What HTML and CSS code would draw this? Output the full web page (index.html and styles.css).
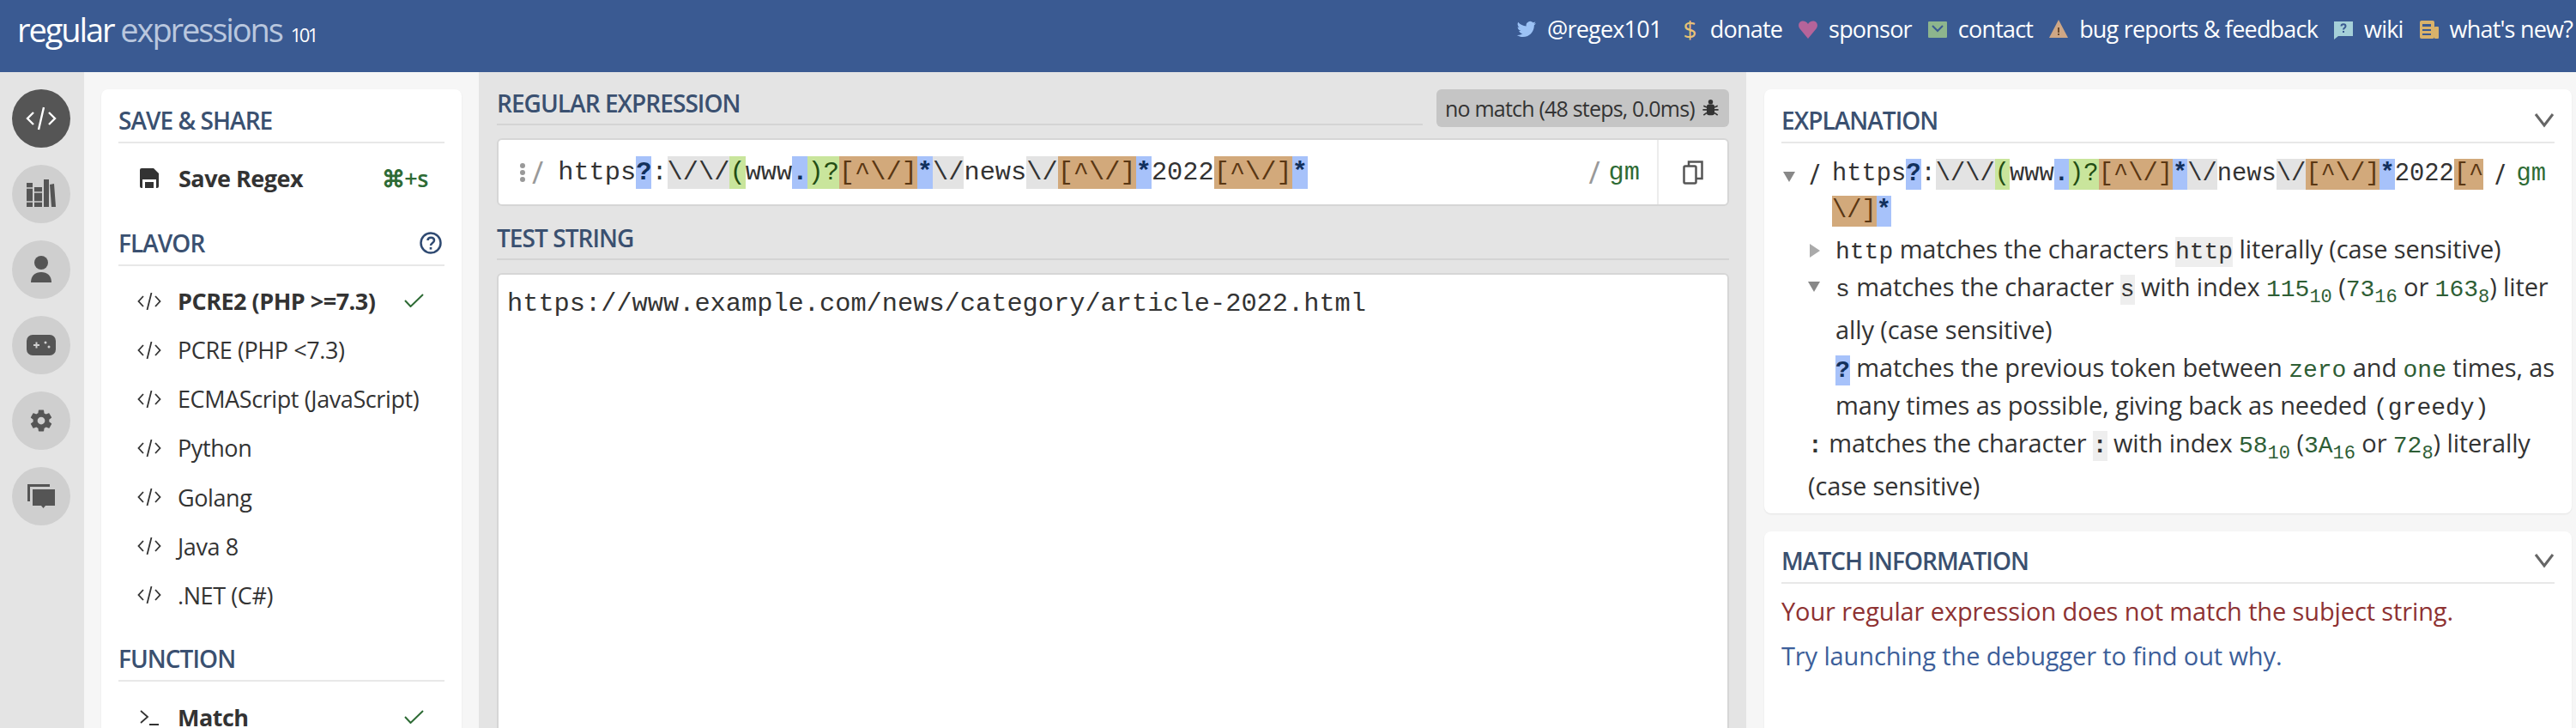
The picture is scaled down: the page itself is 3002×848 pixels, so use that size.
FILE: index.html
```html
<!DOCTYPE html>
<html lang="en">
<head>
<meta charset="utf-8">
<title>regex101</title>
<link rel="stylesheet" href="styles.css">
</head>
<body>
<header class="top">
  <div class="logo"><span class="l1">regular</span><span class="l2">expressions</span><span class="l3">101</span></div>
  <nav class="nav">
    <a class="nav-item"><svg class="ni" viewBox="0 0 24 24"><path fill="#9cc2f5" d="M23 5c-.8.4-1.7.6-2.6.7.9-.6 1.6-1.4 2-2.5-.9.5-1.8.9-2.9 1.1A4.6 4.6 0 0 0 11.7 8.500C7.900 8.300 4.500 6.500 2.200 3.700c-1.200 2.100-.6 4.800 1.400 6.100-.7 0-1.400-.2-2-.6 0 2.200 1.500 4.100 3.700 4.600-.7.200-1.400.2-2.100.1.600 1.800 2.300 3.100 4.300 3.200A9.300 9.300 0 0 1 .7 19c2.100 1.300 4.500 2.100 7.100 2.100 8.500 0 13.300-7.200 13-13.600.9-.7 1.700-1.500 2.200-2.500z"/></svg><span>@regex101</span></a>
    <a class="nav-item wide"><span class="dollar">$</span><span>donate</span></a>
    <a class="nav-item"><svg class="ni" viewBox="0 0 24 24"><path fill="#b5649a" d="M12 23 2.500 11.500C-.5 7.500 1.500 2.500 6 2.500c2.800 0 4.800 1.500 6 3.500 1.200-2 3.200-3.500 6-3.500 4.500 0 6.500 5 3.500 9z"/></svg><span>sponsor</span></a>
    <a class="nav-item"><svg class="ni" viewBox="0 0 24 24"><rect x="1" y="3" width="22" height="19" rx="1" fill="#8db58d"/><path d="M6 8l6 6 6-6" fill="none" stroke="#3a5a92" stroke-width="2"/></svg><span>contact</span></a>
    <a class="nav-item"><svg class="ni" viewBox="0 0 24 24"><path fill="#cfa785" d="M12 1 23 22H1z"/><rect x="11" y="10" width="2" height="6" fill="#6b4a2c"/><rect x="11" y="17" width="2" height="2" fill="#6b4a2c"/></svg><span>bug reports &amp; feedback</span></a>
    <a class="nav-item"><svg class="ni" viewBox="0 0 24 24"><path fill="#a5d0d8" d="M1 3h22v17H6l-5 4z"/><path d="M9.500 8.500c0-3 5-3 5 0 0 2-2.500 2-2.500 4M12 14v2" fill="none" stroke="#3a5a92" stroke-width="2"/></svg><span>wiki</span></a>
    <a class="nav-item"><svg class="ni" viewBox="0 0 24 24"><rect x="1" y="2" width="17" height="21" rx="2" fill="#d9b26a"/><rect x="18" y="9" width="5" height="14" rx="1" fill="#d9b26a"/><rect x="4" y="6" width="10" height="3" fill="#3a5a92"/><rect x="4" y="12" width="10" height="2" fill="#3a5a92"/><rect x="4" y="17" width="10" height="2" fill="#3a5a92"/></svg><span>what's new?</span></a>
  </nav>
</header>
<div class="app">
  <aside class="rail">
    <div class="rail-btn active"><svg viewBox="0 0 36 28" width="36" height="28" fill="none" stroke="#fff" stroke-width="2.400"><path d="M9 7 2 14l7 7M27 7l7 7-7 7M21 1l-6 26"/></svg></div>
    <div class="rail-btn"><svg viewBox="0 0 34 34" width="34" height="34" fill="#555"><path d="M0 4h7v28H0zM9 9h9v23H9zM20 0h6v32h-6zM27 6l5-1 2 27h-5z"/><path d="M0 10h7M0 26h7M9 15h9M9 26h9" stroke="#cfcfcf" stroke-width="1.500"/></svg></div>
    <div class="rail-btn"><svg viewBox="0 0 24 32" width="24" height="32" fill="#555"><circle cx="12" cy="8" r="8"/><path d="M0 31c0-8 5-12 12-12s12 4 12 12z"/></svg></div>
    <div class="rail-btn"><svg viewBox="0 0 34 24" width="34" height="24"><rect width="34" height="24" rx="7" fill="#555"/><path d="M8 12h7M11.500 8.500v7" stroke="#cfcfcf" stroke-width="2"/><circle cx="22" cy="9" r="1.500" fill="#cfcfcf"/><circle cx="26" cy="14" r="1.500" fill="#cfcfcf"/></svg></div>
    <div class="rail-btn"><svg viewBox="0 0 24 24" width="30" height="30"><path fill="#555" d="M19.400 13c.04-.33.06-.66.06-1s-.02-.67-.06-1l2.100-1.600c.2-.15.25-.42.12-.64l-2-3.460c-.12-.22-.39-.3-.61-.22l-2.490 1c-.52-.4-1.080-.73-1.690-.98l-.38-2.650A.49.49 0 0 0 14 2h-4c-.25 0-.46.18-.49.42l-.38 2.650c-.61.25-1.170.59-1.690.98l-2.490-1a.5.5 0 0 0-.61.22l-2 3.460c-.13.22-.07.49.12.64L4.560 11c-.04.33-.07.66-.07 1s.03.67.07 1l-2.100 1.600c-.2.15-.25.42-.12.64l2 3.460c.12.22.39.3.61.22l2.490-1c.52.4 1.080.73 1.690.98l.38 2.650c.03.24.24.42.49.42h4c.25 0 .46-.18.49-.42l.38-2.650c.61-.25 1.170-.59 1.690-.98l2.490 1c.23.08.49 0 .61-.22l2-3.460c.12-.22.07-.49-.12-.64zM12 15.500a3.500 3.500 0 1 1 0-7 3.500 3.500 0 0 1 0 7z"/></svg></div>
    <div class="rail-btn"><svg viewBox="0 0 32 28" width="32" height="28" fill="#555"><path d="M6 6h26v19h-11l-2.500 3-2.500-3H6z"/><path d="M0 0h26v3H3v17H0z"/></svg></div>
  </aside>
  <section class="left">
    <div class="card left-card">
      <h3 class="head first">SAVE &amp; SHARE</h3>
      <div class="row save-row">
        <svg class="ic-save" viewBox="0 0 22 23" width="22" height="23"><path fill="#333" d="M0 2a2 2 0 0 1 2-2h14l6 6v15a2 2 0 0 1-2 2H2a2 2 0 0 1-2-2z"/><rect x="3" y="13" width="16" height="10" fill="#fff"/><rect x="6" y="16" width="10" height="7" fill="#333"/></svg>
        <b class="row-text">Save Regex</b><span class="kbd">⌘+s</span>
      </div>
      <h3 class="head flavor">FLAVOR<svg class="help" viewBox="0 0 26 26" width="26" height="26"><circle cx="13" cy="13" r="11.500" fill="none" stroke="#2f4a72" stroke-width="2.500"/><path d="M9.500 10c0-4.500 7.500-4.500 7.500 0 0 3-4 3-4 6" fill="none" stroke="#2f4a72" stroke-width="2.500"/><rect x="11.700" y="18" width="2.600" height="2.600" fill="#2f4a72"/></svg></h3>
      <ul class="list">
        <li class="row"><svg class="ic-code" viewBox="0 0 28 20"><path d="M7 4 1.500 10 7 16M21 4l5.500 6-5.500 6M16.500 0l-5 20" fill="none" stroke="#333" stroke-width="1.800"/></svg><b class="row-text">PCRE2 (PHP &gt;=7.3)</b><svg class="check" viewBox="0 0 23 16"><path d="M1 8l6.500 7L22 1" fill="none" stroke="#2e6b35" stroke-width="2"/></svg></li>
        <li class="row"><svg class="ic-code" viewBox="0 0 28 20"><path d="M7 4 1.500 10 7 16M21 4l5.500 6-5.500 6M16.500 0l-5 20" fill="none" stroke="#333" stroke-width="1.800"/></svg><span class="row-text">PCRE (PHP &lt;7.3)</span></li>
        <li class="row"><svg class="ic-code" viewBox="0 0 28 20"><path d="M7 4 1.500 10 7 16M21 4l5.500 6-5.500 6M16.500 0l-5 20" fill="none" stroke="#333" stroke-width="1.800"/></svg><span class="row-text">ECMAScript (JavaScript)</span></li>
        <li class="row"><svg class="ic-code" viewBox="0 0 28 20"><path d="M7 4 1.500 10 7 16M21 4l5.500 6-5.500 6M16.500 0l-5 20" fill="none" stroke="#333" stroke-width="1.800"/></svg><span class="row-text">Python</span></li>
        <li class="row"><svg class="ic-code" viewBox="0 0 28 20"><path d="M7 4 1.500 10 7 16M21 4l5.500 6-5.500 6M16.500 0l-5 20" fill="none" stroke="#333" stroke-width="1.800"/></svg><span class="row-text">Golang</span></li>
        <li class="row"><svg class="ic-code" viewBox="0 0 28 20"><path d="M7 4 1.500 10 7 16M21 4l5.500 6-5.500 6M16.500 0l-5 20" fill="none" stroke="#333" stroke-width="1.800"/></svg><span class="row-text">Java 8</span></li>
        <li class="row"><svg class="ic-code" viewBox="0 0 28 20"><path d="M7 4 1.500 10 7 16M21 4l5.500 6-5.500 6M16.500 0l-5 20" fill="none" stroke="#333" stroke-width="1.800"/></svg><span class="row-text">.NET (C#)</span></li>
      </ul>
      <h3 class="head func">FUNCTION</h3>
      <div class="row match-row"><svg class="ic-code" viewBox="0 0 28 20"><path d="M4 3l8 7-8 7M14 19h11" fill="none" stroke="#333" stroke-width="1.800"/></svg><b class="row-text">Match</b><svg class="check" viewBox="0 0 23 16"><path d="M1 8l6.500 7L22 1" fill="none" stroke="#2e6b35" stroke-width="2"/></svg></div>
    </div>
  </section>
  <main class="main">
    <div class="main-top">
      <h3 class="head main-head">REGULAR EXPRESSION</h3>
      <div class="badge"><span>no match (48 steps, 0.0ms)</span><svg viewBox="0 0 20 22" width="19" height="20" fill="#333"><circle cx="10" cy="3" r="3"/><rect x="5" y="6" width="10" height="14" rx="3"/><path d="M1 8l4 2M19 8l-4 2M0 13h5M20 13h-5M1 20l4-3M19 20l-4-3" stroke="#333" stroke-width="1.800"/></svg></div>
    </div>
    <div class="regex-box">
      <div class="grip"><i></i><i></i><i></i></div>
      <span class="slash">/</span>
      <div class="mono rx"><span>https</span><span class="q">?</span><span>:</span><span class="g">\/\/</span><span class="gr">(</span><span>www</span><span class="q">.</span><span class="gr">)?</span><span class="o">[^\/]</span><span class="q">*</span><span class="g">\/</span><span>news</span><span class="g">\/</span><span class="o">[^\/]</span><span class="q">*</span><span>2022</span><span class="o">[^\/]</span><span class="q">*</span></div>
      <div class="flags"><span class="slash">/</span> <span class="mono fl">gm</span></div>
      <div class="copy"><svg viewBox="0 0 24 28" width="24" height="28" fill="none" stroke="#555" stroke-width="2.500"><rect x="1.500" y="6.500" width="14" height="20" rx="1.500"/><path d="M7 6V1.500h15.500V21H16"/></svg></div>
    </div>
    <h3 class="head test-head">TEST STRING</h3>
    <div class="test-box mono">https://www.example.com/news/category/article-2022.html</div>
  </main>
  <aside class="right">
    <div class="card exp-card">
      <h3 class="head first">EXPLANATION<svg class="chev" viewBox="0 0 24 18" width="24" height="18"><path d="M2 2l10 13L22 2" fill="none" stroke="#666" stroke-width="3"/></svg></h3>
      <div class="exp-re">
        <span class="tri down big"></span><span class="eslash">/</span>
        <div class="mono rx small"><span>https</span><span class="q">?</span><span>:</span><span class="g">\/\/</span><span class="gr">(</span><span>www</span><span class="q">.</span><span class="gr">)?</span><span class="o">[^\/]</span><span class="q">*</span><span class="g">\/</span><span>news</span><span class="g">\/</span><span class="o">[^\/]</span><span class="q">*</span><span>2022</span><span class="o">[^</span><br><span class="o">\/]</span><span class="q">*</span></div>
        <div class="eflags"><span class="eslash">/</span> <span class="mono efl">gm</span></div>
      </div>
      <div class="tree">
        <p class="t1"><span class="tri rt"></span><code class="c">http</code> matches the characters <code class="c bgq">http</code> literally (case sensitive)</p>
        <p class="t1"><span class="tri down"></span><code class="c">s</code> matches the character <code class="c bgq">s</code> with index <code class="n">115<sub>10</sub></code> (<code class="n">73<sub>16</sub></code> or <code class="n">163<sub>8</sub></code>) liter<br>ally (case sensitive)</p>
        <p class="t1"><code class="c qb">?</code> matches the previous token between <code class="n">zero</code> and <code class="n">one</code> times, as<br>many times as possible, giving back as needed <code class="c">(greedy)</code></p>
        <p class="t0"><code class="c strong">:</code> matches the character <code class="c bgq strong">:</code> with index <code class="n">58<sub>10</sub></code> (<code class="n">3A<sub>16</sub></code> or <code class="n">72<sub>8</sub></code>) literally<br>(case sensitive)</p>
      </div>
    </div>
    <div class="card info-card">
      <h3 class="head first">MATCH INFORMATION<svg class="chev" viewBox="0 0 24 18" width="24" height="18"><path d="M2 2l10 13L22 2" fill="none" stroke="#666" stroke-width="3"/></svg></h3>
      <p class="err">Your regular expression does not match the subject string.</p>
      <p class="try">Try launching the debugger to find out why.</p>
    </div>
  </aside>
</div>
</body>
</html>
```
FILE: styles.css
```css
* { box-sizing: border-box; }
html, body { margin: 0; height: 848px; overflow: hidden; }
body { font-family: "Open Sans", sans-serif; font-size: 28px; color: #333; background: #f6f6f6; }
h3, p, ul { margin: 0; padding: 0; list-style: none; }
a { color: inherit; }

.top { height: 84px; background: #3a5a92; display: flex; justify-content: space-between; align-items: flex-start; color: #fff; }
.logo { display: flex; align-items: baseline; padding: 9px 0 0 20px; font-size: 38px; line-height: 50px; letter-spacing: -2.100px; white-space: nowrap; }
.l1 { margin-right: 8px; }
.l2 { color: #b9c7de; margin-right: 10px; }
.l3 { font-size: 22px; letter-spacing: -2.500px; }
.nav { display: flex; padding: 14px 4px 0 0; }
.nav-item { display: flex; align-items: center; gap: 12px; margin-left: 18px; font-size: 27px; line-height: 40px; letter-spacing: -.8px; white-space: nowrap; }
.nav-item.wide { margin-left: 25px; gap: 16px; }
.ni { width: 24px; height: 26px; flex: none; }
.dollar { color: #e8c276; font-size: 28px; }

.app { display: flex; height: 764px; }
.rail { width: 98px; flex: none; background: #e4e4e4; padding: 20px 0 0 14px; display: flex; flex-direction: column; gap: 20px; }
.rail-btn { width: 68px; height: 68px; flex: none; border-radius: 50%; background: #cfcfcf; display: flex; align-items: center; justify-content: center; }
.rail-btn.active { background: #555; }

.left { width: 460px; flex: none; background: #f6f6f6; padding: 20px 20px 0; }
.card { background: #fff; border-radius: 8px; box-shadow: 0 1px 2px rgba(0,0,0,.08); padding: 0 20px; }
.left-card { height: 800px; }
.head { display: flex; justify-content: space-between; align-items: center; font-size: 28px; font-weight: 600; line-height: 36px; letter-spacing: -.95px; color: #3a5070; border-bottom: 2px solid #e8e8e8; padding-bottom: 7px; }
.head.first { padding-top: 18px; }

.row { display: flex; align-items: center; height: 57.100px; padding-left: 22px; font-size: 27px; letter-spacing: -.4px; white-space: nowrap; position: relative; }
.row b { letter-spacing: -.5px; }
.row-text { margin-left: 19px; }
.save-row { margin-top: 12px; padding-left: 25px; }
.save-row .row-text { margin-left: 23px; }
.kbd { position: absolute; right: 19px; color: #2e6b35; font-weight: 600; }
.flavor { margin-top: 29px; }
.help { margin-right: 3px; }
.list { margin-top: 12px; }
.ic-code { width: 28px; height: 20px; flex: none; }
.check { position: absolute; right: 24px; top: 20px; width: 23px; height: 16px; }
.func { margin-top: 27px; }
.match-row { margin-top: 13px; }

.main { width: 1477px; flex: none; background: #e4e4e4; padding: 20px 20px 0 21px; }
.main-top { display: flex; gap: 16px; align-items: flex-start; }
.main-head { flex: 1; line-height: 33px; border-bottom-color: #d4d4d4; }
.badge { width: 341px; height: 44px; background: #c5c5c5; border-radius: 6px; display: flex; align-items: center; justify-content: space-between; padding: 0 12px 0 10px; font-size: 25px; letter-spacing: -.8px; white-space: nowrap; }
.regex-box { margin-top: 13px; height: 79px; background: #fff; border: 2px solid #d6d6d6; border-radius: 6px; display: flex; align-items: center; padding-left: 25px; position: relative; }
.grip { display: flex; flex-direction: column; gap: 2px; width: 7px; }
.grip i { width: 6px; height: 6px; border-radius: 50%; background: #999; }
.slash { color: #999; font-size: 36px; font-weight: 400; line-height: 38px; }
.regex-box > .slash { margin-left: 7px; margin-right: 17px; }
.mono { font-family: "Liberation Mono", monospace; font-size: 30.330px; }
.rx { display: flex; flex-wrap: wrap; flex: 1; color: #333; line-height: 38px; white-space: pre; }
.rx span { display: block; height: 38px; }
.q { background: #a7c2fa; color: #12305c; font-weight: 700; }
.g { background: #e3e3e3; }
.gr { background: #c9e59c; color: #234d14; }
.o { background: #d2a97b; color: #5a3713; }
.flags { display: flex; align-items: center; gap: 10px; margin-right: 20px; }
.fl { color: #2e6b35; }
.copy { width: 82px; height: 100%; border-left: 2px solid #ececec; display: flex; align-items: center; justify-content: center; }
.test-head { margin-top: 19px; border-bottom-color: #d4d4d4; padding-bottom: 6px; }
.test-box { margin-top: 15px; height: 600px; background: #fff; border: 2px solid #d6d6d6; border-radius: 6px; padding: 14px 10px; line-height: 40px; color: #333; }

.right { flex: 1; background: #f6f6f6; padding: 20px 5px 0 21px; }
.exp-card { height: 494px; }
.chev { align-self: flex-end; margin: 0 0 9px; }
.exp-re { position: relative; margin-top: 18px; height: 83px; padding-left: 59px; }
.rx.small { display: block; font-size: 28.750px; line-height: 43px; height: 86px; }
.rx.small span { display: inline-block; height: 36px; line-height: 36px; vertical-align: top; }
.eslash { position: absolute; left: 33px; top: -4px; font-size: 32px; line-height: 44px; color: #333; }
.eflags { position: absolute; right: 10px; top: 0; display: flex; gap: 13px; }
.eflags .eslash { position: static; margin-top: -4px; }
.efl { color: #2e6b35; font-size: 28.750px; line-height: 36px; }
.tri { position: absolute; width: 0; height: 0; }
.tri.down { border-left: 7px solid transparent; border-right: 7px solid transparent; border-top: 12px solid #888; }
.tri.down.big { left: 2px; top: 15px; }
.tree { font-size: 29px; letter-spacing: -.12px; white-space: nowrap; line-height: 44px; }
.tree p { position: relative; }
.t1 { padding-left: 63px; }
.t0 { padding-left: 31px; }
.t1 .tri.rt { left: 33px; top: 16px; border-top: 8px solid transparent; border-bottom: 8px solid transparent; border-left: 12px solid #aaa; }
.t1 .tri.down { left: 31px; top: 16px; }
code { font-family: "Liberation Mono", monospace; font-size: 28px; letter-spacing: 0; line-height: 1; }
.bgq { background: #eeeeee; padding: 2px 0; }
.strong { font-weight: 700; }
.qb { background: #a7c2fa; color: #12305c; font-weight: 700; padding: 2px 0; }
.n { color: #2e5e35; }
sub { font-size: 22px; line-height: 31px; vertical-align: -7px; }
.info-card { margin-top: 21px; height: 300px; }
.info-card .head.first { padding-top: 16px; }
.err { color: #8e3232; font-size: 29px; letter-spacing: -.12px; line-height: 52px; margin-top: 6px; white-space: nowrap; }
.try { color: #3d5f9a; font-size: 29px; letter-spacing: -.12px; line-height: 52px; white-space: nowrap; }
```
